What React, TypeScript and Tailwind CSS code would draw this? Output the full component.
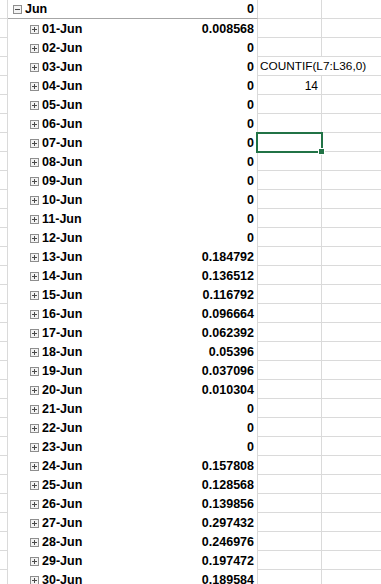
import React from "react";

const days: [string, string][] = [
  ["01-Jun", "0.008568"],
  ["02-Jun", "0"],
  ["03-Jun", "0"],
  ["04-Jun", "0"],
  ["05-Jun", "0"],
  ["06-Jun", "0"],
  ["07-Jun", "0"],
  ["08-Jun", "0"],
  ["09-Jun", "0"],
  ["10-Jun", "0"],
  ["11-Jun", "0"],
  ["12-Jun", "0"],
  ["13-Jun", "0.184792"],
  ["14-Jun", "0.136512"],
  ["15-Jun", "0.116792"],
  ["16-Jun", "0.096664"],
  ["17-Jun", "0.062392"],
  ["18-Jun", "0.05396"],
  ["19-Jun", "0.037096"],
  ["20-Jun", "0.010304"],
  ["21-Jun", "0"],
  ["22-Jun", "0"],
  ["23-Jun", "0"],
  ["24-Jun", "0.157808"],
  ["25-Jun", "0.128568"],
  ["26-Jun", "0.139856"],
  ["27-Jun", "0.297432"],
  ["28-Jun", "0.246976"],
  ["29-Jun", "0.197472"],
  ["30-Jun", "0.189584"],
];

// small +/- expand button of the pivot table
function ToggleBox({ open }: { open: boolean }) {
  return (
    <svg width="9" height="9" viewBox="0 0 9 9" className="shrink-0">
      <rect x="0.5" y="0.5" width="8" height="8" fill="#f3f3f3" stroke="#8e8e8e" />
      <line x1="2" y1="4.5" x2="7" y2="4.5" stroke="#4a4a4a" />
      {!open && <line x1="4.5" y1="2" x2="4.5" y2="7" stroke="#4a4a4a" />}
    </svg>
  );
}

export default function App() {
  return (
    <div
      className="w-[381px] h-[584px] overflow-hidden bg-white text-black"
      style={{ fontFamily: '"Liberation Sans", Arial, sans-serif' }}
    >
      {/* header row */}
      <div className="flex h-[19px]">
        <div className="w-[8px] border-r border-b border-[#dadada]"></div>
        <div className="w-[250px] flex items-center pt-[1px] border-r border-b border-r-[#dadada] border-b-[#a6a6a6] text-[12.5px] font-bold">
          <div className="ml-[5px] flex items-center gap-[3px]">
            <ToggleBox open={true} />
            <span>Jun</span>
          </div>
          <span className="ml-auto pr-[3px]">0</span>
        </div>
        <div className="w-[64px] border-r border-b border-[#dadada]"></div>
        <div className="flex-1 border-b border-[#dadada]"></div>
      </div>

      {days.map(([label, value], i) => (
        <div key={label} className="flex h-[19px]">
          <div className="w-[8px] border-r border-b border-[#dadada]"></div>
          <div className="w-[250px] flex items-center pt-[1px] border-r border-[#dadada] text-[12.5px] font-bold">
            <div className="ml-[22px] flex items-center gap-[3px]">
              <ToggleBox open={false} />
              <span>{label}</span>
            </div>
            <span className="ml-auto pr-[3px]">{value}</span>
          </div>
          {i === 2 ? (
            <div className="w-[64px] flex items-center pt-[1px] border-b border-[#dadada] pl-[2px] text-[11.8px] whitespace-nowrap overflow-visible z-10">
              COUNTIF(L7:L36,0)
            </div>
          ) : i === 3 ? (
            <div className="w-[64px] flex items-center justify-end pt-[1px] border-r border-b border-[#dadada] pr-[3px] text-[12px]">
              14
            </div>
          ) : i === 6 ? (
            <div className="relative w-[64px] border-r border-b border-[#dadada]">
              <div className="absolute -left-[2px] -top-[1px] w-[67px] h-[21px] border-2 border-[#217346]"></div>
              <div className="absolute left-[60px] top-[15px] w-[7px] h-[7px] bg-[#217346] border border-white"></div>
            </div>
          ) : (
            <div className="w-[64px] border-r border-b border-[#dadada]"></div>
          )}
          <div className="flex-1 border-b border-[#dadada]"></div>
        </div>
      ))}
    </div>
  );
}
